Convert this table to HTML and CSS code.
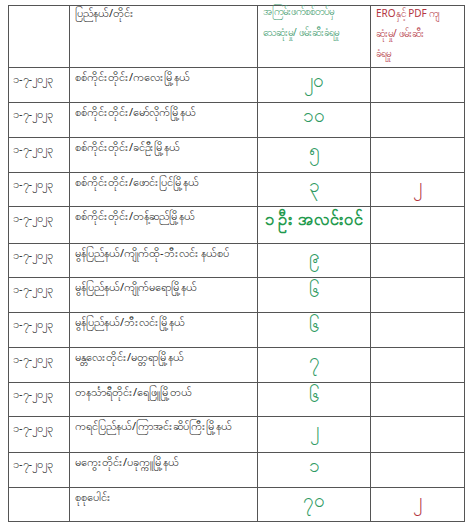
FILE: index.html
```html
<!DOCTYPE html>
<html>
<head>
<meta charset="utf-8">
<link rel="stylesheet" href="styles.css">
</head>
<body>
<div class="report">
  <div class="cell"></div>
  <div class="cell head"><div class="hd">ပြည်နယ်/တိုင်း</div></div>
  <div class="cell head h-green"><div class="hd">အကြမ်းဖက်စစ်တပ်မှ<br>သေဆုံးမှု/ ဖမ်းဆီးခံရမှု</div></div>
  <div class="cell head h-red"><div class="hd">EROနှင့် PDF ကျ<br>ဆုံးမှု/ ဖမ်းဆီး<br>ခံရမှု</div></div>

  <div class="cell date">၁-၇-၂၀၂၃</div><div class="cell place">စစ်ကိုင်းတိုင်း/ကလေးမြို့နယ်</div><div class="cell num">၂၀</div><div class="cell num red"></div>
  <div class="cell date">၁-၇-၂၀၂၃</div><div class="cell place">စစ်ကိုင်းတိုင်း/မော်လိုက်မြို့နယ်</div><div class="cell num">၁၀</div><div class="cell num red"></div>
  <div class="cell date">၁-၇-၂၀၂၃</div><div class="cell place">စစ်ကိုင်းတိုင်း/ခင်ဦးမြို့နယ်</div><div class="cell num">၅</div><div class="cell num red"></div>
  <div class="cell date">၁-၇-၂၀၂၃</div><div class="cell place">စစ်ကိုင်းတိုင်း/ဖောင်းပြင်မြို့နယ်</div><div class="cell num">၃</div><div class="cell num red">၂</div>
  <div class="cell date">၁-၇-၂၀၂၃</div><div class="cell place">စစ်ကိုင်းတိုင်း/တန့်ဆည်မြို့နယ်</div><div class="cell num bold">၁ ဦး အလင်းဝင်</div><div class="cell num red"></div>
  <div class="cell date">၁-၇-၂၀၂၃</div><div class="cell place">မွန်ပြည်နယ်/ကျိုက်ထို-ဘီးလင်း နယ်စပ်</div><div class="cell num">၉</div><div class="cell num red"></div>
  <div class="cell date">၁-၇-၂၀၂၃</div><div class="cell place">မွန်ပြည်နယ်/ကျိုက်မရောမြို့နယ်</div><div class="cell num">၆</div><div class="cell num red"></div>
  <div class="cell date">၁-၇-၂၀၂၃</div><div class="cell place">မွန်ပြည်နယ်/ဘီးလင်းမြို့နယ်</div><div class="cell num">၆</div><div class="cell num red"></div>
  <div class="cell date">၁-၇-၂၀၂၃</div><div class="cell place">မန္တလေးတိုင်း/မတ္တရာမြို့နယ်</div><div class="cell num">၇</div><div class="cell num red"></div>
  <div class="cell date">၁-၇-၂၀၂၃</div><div class="cell place">တနင်္သာရီတိုင်း/ရေဖြူမြို့တယ်</div><div class="cell num">၆</div><div class="cell num red"></div>
  <div class="cell date">၁-၇-၂၀၂၃</div><div class="cell place">ကရင်ပြည်နယ်/ကြာအင်းဆိပ်ကြီးမြို့နယ်</div><div class="cell num">၂</div><div class="cell num red"></div>
  <div class="cell date">၁-၇-၂၀၂၃</div><div class="cell place">မကွေးတိုင်း/ပခုက္ကူမြို့နယ်</div><div class="cell num">၁</div><div class="cell num red"></div>
  <div class="cell"></div><div class="cell place">စုစုပေါင်း</div><div class="cell num">၇၀</div><div class="cell num red">၂</div>
</div>
</body>
</html>
```
FILE: styles.css
```css
html, body {
  margin: 0;
  padding: 0;
  background: #ffffff;
}
body {
  padding: 5px 0 0 8px;
  font-family: "Noto Sans", "DejaVu Sans", sans-serif;
  color: #1e1e1e;
}
.report {
  display: grid;
  width: 457px;
  box-sizing: border-box;
  grid-template-columns: 60px 187px 112px 93px;
  grid-template-rows: 61px 34px 34px 34px 33px 36px 33px 34px 34px 34px 33px 35px 34px 33px;
  gap: 1px;
  padding: 1px;
  background: #555555;
}
.cell {
  background: #ffffff;
  font-size: 11px;
  line-height: 20px;
  overflow: visible;
  white-space: nowrap;
  min-width: 0;
}
.head {
  padding-left: 5px;
}
.hd {
  margin-top: -3px;
}
.date {
  padding: 5px 0 0 4px;
  line-height: 12px;
  color: #262626;
}
.place {
  padding: 6px 0 0 5px;
  line-height: 6px;
}
.h-green {
  color: #3d9a6e;
  font-size: 10px;
  line-height: 21px;
}
.h-green .hd { margin-top: -5px; }
.h-red {
  color: #b3353f;
  font-size: 10px;
  line-height: 20px;
}
.h-red .hd { margin-top: -3px; }
.num {
  display: flex;
  align-items: flex-start;
  justify-content: center;
  padding-top: 1px;
  font-size: 19px;
  line-height: 22px;
  color: #2e9a62;
}
.num.red { color: #b3353f; }
.num.bold {
  padding-top: 1px;
  font-size: 16.5px;
  font-weight: bold;
  color: #1f9a4e;
}
```
